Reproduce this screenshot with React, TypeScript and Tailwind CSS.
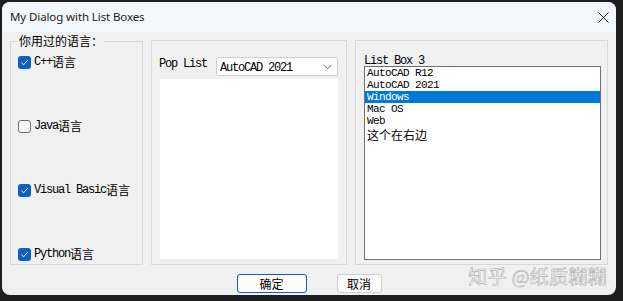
import React from 'react'

const mono = "font-['Liberation_Mono',monospace] text-[12px] tracking-[-1.2px]"
const monoSm = "font-['Liberation_Mono',monospace] text-[11px] tracking-[-0.6px]"
const cjk = "font-['Noto_Sans_CJK_SC',sans-serif] text-[12px]"

type CheckProps = { label: string; checked: boolean }

function Check({ label, checked }: CheckProps) {
  return (
    <div className="flex items-center h-[14px]">
      {checked ? (
        <span className="w-[13px] h-[13px] rounded-[3px] bg-[#0f5fbf] flex items-center justify-center">
          <svg width="9" height="9" viewBox="0 0 9 9">
            <path d="M1.5 4.8 L3.6 6.8 L7.6 2.2" stroke="white" strokeWidth="1" fill="none" />
          </svg>
        </span>
      ) : (
        <span className="w-[13px] h-[13px] rounded-[3px] border border-[#6e6e6e] bg-[#f7f7f7]" />
      )}
      <span className={`ml-[3px] text-black ${mono}`}>{label}</span>
      <span className={`text-black leading-[14px] ${cjk}`}>语言</span>
    </div>
  )
}

const items = ['AutoCAD R12', 'AutoCAD 2021', 'Windows', 'Mac OS', 'Web']

export default function App() {
  return (
    <div className="w-[623px] h-[301px] bg-[#1e1e1e] pt-[2px] pl-[2px] pr-[7px] pb-[6px]">
      <div className="relative h-full rounded-[8px] overflow-hidden flex flex-col bg-[#f0f0f0]">
        {/* title bar */}
        <div className="h-[30px] shrink-0 bg-[#f4f7fb] flex items-center justify-between pl-[8px] pr-[6px]">
          <span className="font-['Noto_Sans',sans-serif] text-[11.5px] tracking-[-0.1px] text-[#1a1a1a]">My Dialog with List Boxes</span>
          <svg width="11" height="11" viewBox="0 0 11 11" className="mr-[1px]">
            <path d="M0.5 0.5 L10.5 10.5 M10.5 0.5 L0.5 10.5" stroke="#1a1a1a" strokeWidth="1" />
          </svg>
        </div>

        {/* body */}
        <div className="flex-1 flex flex-col px-[8px]">
          <div className="flex items-start gap-[8px]">
            <fieldset className="w-[133px] min-w-[133px] h-[231px] mt-[2px] border border-[#d9d9d9] pl-[7px] pr-[4px]">
              <legend className={`px-[1px] leading-[14px] text-black ${cjk}`}>你用过的语言：</legend>
              <div className="flex flex-col gap-[50px] pt-[7px]">
                <Check label="C++" checked />
                <Check label="Java" checked={false} />
                <Check label="Visual Basic" checked />
                <Check label="Python" checked />
              </div>
            </fieldset>

            <div className="w-[199px] h-[225px] mt-[8px] border border-[#d9d9d9] pl-[7px] pr-[8px] pt-[16px] flex flex-col">
              <div className="flex items-start gap-[8px]">
                <span className={`leading-[12px] mt-[1px] w-[49px] text-black ${mono}`}>Pop List</span>
                <div className="flex-1 h-[19px] bg-white border border-[#cfcfcf] rounded-[2px] flex items-center justify-between pl-[3px] pr-[5px]">
                  <span className={`pt-[3px] text-black ${mono}`}>AutoCAD 2021</span>
                  <svg width="9" height="6" viewBox="0 0 9 6">
                    <path d="M0.5 0.8 L4.5 4.8 L8.5 0.8" stroke="#606060" strokeWidth="1" fill="none" />
                  </svg>
                </div>
              </div>
              <div className="mt-[3px] ml-[1px] h-[180px] bg-white" />
            </div>

            <div className="w-[257px] h-[225px] mt-[8px] border border-[#d9d9d9] pl-[8px] pr-[6px] pt-[15px] flex flex-col">
              <span className={`leading-[10px] text-black ${mono}`}>List Box 3</span>
              <div className="h-[194px] bg-white border border-[#707070] flex flex-col">
                {items.map((t, i) => (
                  <div
                    key={t}
                    className={`h-[12px] leading-[12px] pl-[2px] ${monoSm} ${i === 2 ? 'bg-[#0078d7] text-white' : 'text-black'}`}
                  >
                    {t}
                  </div>
                ))}
                <div className={`mt-[1px] h-[14px] leading-[14px] pl-[2px] text-black ${cjk}`}>这个在右边</div>
              </div>
            </div>
          </div>

          {/* buttons */}
          <div className="flex justify-center gap-[30px] mt-[9px]">
            <button className={`w-[70px] h-[19px] bg-[#fdfdfd] border border-[#0f5fbf] rounded-[3px] leading-[17px] text-black ${cjk}`}>确定</button>
            <button className={`w-[45px] h-[19px] bg-[#fbfbfb] border border-[#d0d0d0] rounded-[3px] leading-[17px] text-black ${cjk}`}>取消</button>
          </div>
        </div>

        {/* watermark */}
        <div className="absolute right-[9px] bottom-[8px] font-['Noto_Sans_CJK_SC',sans-serif] text-[19px] leading-[22px] text-[#fafafa] [-webkit-text-stroke:0.6px_#b0b0b0] tracking-[0.3px]">
          知乎 @纸质糊糊
        </div>
      </div>
    </div>
  )
}
